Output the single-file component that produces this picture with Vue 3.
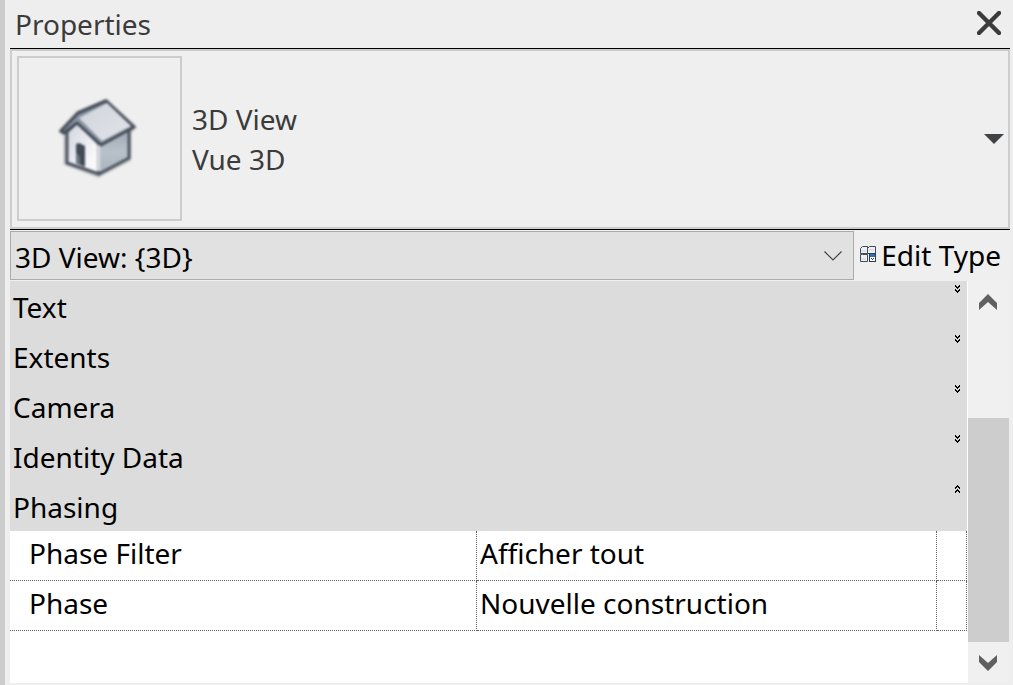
<script setup>
import { ref, computed } from 'vue';

const view = ref('{3D}');
const groups = ref([
  { name: 'Text', open: false, rows: [] },
  { name: 'Extents', open: false, rows: [] },
  { name: 'Camera', open: false, rows: [] },
  { name: 'Identity Data', open: false, rows: [] },
  {
    name: 'Phasing',
    open: true,
    rows: [
      { label: 'Phase Filter', value: 'Afficher tout' },
      { label: 'Phase', value: 'Nouvelle construction' }
    ]
  }
]);

const scroll = ref({ top: 30, size: 70 });
const thumbStyle = computed(() => ({
  top: scroll.value.top + '%',
  height: scroll.value.size + '%'
}));
</script>

<template>
  <section class="palette">
    <header class="title-bar">
      <h1>Properties</h1>
      <button type="button" class="close" aria-label="Close">
        <svg width="24" height="24" viewBox="0 0 24 24">
          <path d="M2 2L22 22M22 2L2 22" stroke="#3b3b3b" stroke-width="4.4" stroke-linecap="round" />
        </svg>
      </button>
    </header>

    <button type="button" class="type-selector">
      <span class="preview">
        <svg class="house" width="95" height="95" viewBox="2 0 95 95">
          <g stroke-linejoin="round">
            <path d="M11 40L28 22L56 10L84 36L79 41V68L48 84L16 72V43Z" fill="#4a525d" stroke="#4a525d" stroke-opacity=".3" stroke-width="5" />
            <path d="M17 41L27 31L49 53V83L17 72Z" fill="url(#front)" stroke="#4d5560" stroke-width="3" />
            <path d="M49 53L79 38V67L49 83Z" fill="url(#side)" stroke="#4d5560" stroke-width="3" />
            <path d="M49 54V80" stroke="#e3e6eb" stroke-width="3" />
            <path d="M11 40L28 22L56 10L84 36L51 54L27 32L14 42Z" fill="#8b95a2" stroke="#464e59" stroke-width="3" />
            <path d="M29 27L57 12L81 35L52 50Z" fill="url(#roof)" />
            <path d="M26 53L29 52L35 55V76L26 72Z" fill="#414a56" />
            <path d="M26 61V72L30 74V66Z" fill="#6b7481" />
          </g>
          <defs>
            <linearGradient id="front" x1="0" y1="0" x2="1" y2="1">
              <stop offset="0" stop-color="#cfd3dc" />
              <stop offset=".75" stop-color="#f8f8fb" />
            </linearGradient>
            <linearGradient id="side" x1="0" y1="0" x2="0" y2="1">
              <stop offset="0" stop-color="#9fa8b3" />
              <stop offset=".5" stop-color="#b9c1ca" />
              <stop offset="1" stop-color="#a9b2bc" />
            </linearGradient>
            <linearGradient id="roof" x1="0" y1="0" x2="1" y2="1">
              <stop offset="0" stop-color="#d0d5dc" />
              <stop offset="1" stop-color="#e1e4e9" />
            </linearGradient>
          </defs>
        </svg>
      </span>
      <span class="type-name">
        <span>3D View</span>
        <span>Vue 3D</span>
      </span>
      <svg width="20" height="10" viewBox="0 0 20 10">
        <path d="M0 0H20L10 10Z" fill="#404244" />
      </svg>
    </button>

    <div class="filter-bar">
      <div class="instance">
        <select v-model="view" aria-label="Instance">
          <option value="{3D}">3D View: {3D}</option>
        </select>
        <svg class="chevron" width="18" height="10" viewBox="0 0 18 10">
          <path d="M.5 .5L9 9L17.5 .5" fill="none" stroke="#444" stroke-width="1.2" />
        </svg>
      </div>
      <button type="button" class="edit-type">
        <svg width="17" height="17" viewBox="0 0 17 17">
          <g fill="#eef0f3" stroke="#3f4a5a">
            <path d="M2.5 .5H7.5V7.5H.5V2.5Z" />
            <path d="M9.5 .5H15.5V7.5H7.5V2.5Z" />
            <path d="M2.5 8.5H7.5V15.5H.5V8.5Z" />
          </g>
          <path d="M1 5H6M9 4H14M1 13H6" stroke="#cbd0d8" />
          <rect x="9.5" y="7.5" width="6" height="8" fill="#fff" stroke="#2f3b4d" />
          <rect x="10" y="8" width="5" height="3" fill="#2f6fc0" />
          <path d="M11 12.5H12M13 12.5H14M12 13.5H13" stroke="#2f3b4d" />
        </svg>
        <span>Edit Type</span>
      </button>
    </div>

    <div class="content">
      <div class="groups">
        <template v-for="group in groups" :key="group.name">
          <button type="button" class="group" :aria-expanded="group.open" @click="group.open = !group.open">
            <span>{{ group.name }}</span>
            <svg class="toggle" :class="{ open: group.open }" width="5" height="8" viewBox="0 0 5 8" shape-rendering="crispEdges">
              <path d="M0 0h1v1h1v1h1v-1h1v-1h1v2h-1v1h-1v1h-1v-1h-1v-1h-1zM0 4h1v1h1v1h1v-1h1v-1h1v2h-1v1h-1v1h-1v-1h-1v-1h-1z" />
            </svg>
          </button>
          <table v-if="group.open && group.rows.length">
            <tbody>
              <tr v-for="row in group.rows" :key="row.label">
                <th scope="row">{{ row.label }}</th>
                <td>{{ row.value }}</td>
                <td class="extra"></td>
              </tr>
            </tbody>
          </table>
        </template>
      </div>

      <div class="scrollbar">
        <button type="button" aria-label="Scroll up">
          <svg width="18" height="16" viewBox="0 0 18 16">
            <path d="M0 9L9 0L18 9V16L9 8L0 16Z" fill="#606060" />
          </svg>
        </button>
        <div class="track">
          <div class="thumb" :style="thumbStyle"></div>
        </div>
        <button type="button" aria-label="Scroll down">
          <svg width="18" height="16" viewBox="0 0 18 16">
            <path d="M0 7L9 16L18 7V0L9 8L0 0Z" fill="#606060" />
          </svg>
        </button>
      </div>
    </div>
  </section>
</template>

<style>
body {
  margin: 0;
  background: #eee;
}
</style>

<style scoped>
.palette {
  box-sizing: border-box;
  display: flex;
  flex-direction: column;
  min-height: 100vh;
  padding: 0 3px 2px 5px;
  border-left: 5px solid #ccc;
  background: #eee;
  color: #000;
  font-family: "Noto Sans", "Open Sans", sans-serif;
  font-size: 28px;
  line-height: 40px;
}
button,
select {
  margin: 0;
  padding: 0;
  border: 0;
  border-radius: 0;
  background: none;
  color: inherit;
  font: inherit;
  text-align: left;
}
svg {
  display: block;
  flex: none;
}

.title-bar {
  display: flex;
  align-items: center;
  justify-content: space-between;
  height: 48px;
  padding: 0 9px 0 5px;
  border-bottom: 1px solid #000;
  color: #3b3b3b;
}
.title-bar h1 {
  margin: 0;
  font-size: 28px;
  font-weight: 400;
}
.close {
  padding-bottom: 2px;
}

.type-selector {
  display: flex;
  align-items: center;
  gap: 10px;
  padding: 5px 4px 6px 5px;
  border: 2px solid #cdcdcd;
  background: #efefef;
  color: #3b3b3b;
}
.preview {
  display: flex;
  align-items: center;
  justify-content: center;
  width: 161px;
  height: 161px;
  border: 2px solid #cdcdcd;
}
.house {
  filter: blur(1px);
}
.type-name {
  display: flex;
  flex: 1;
  flex-direction: column;
}

.filter-bar {
  display: flex;
  padding: 1px 0;
  border-top: 1px solid #000;
  background: #efefef;
}
.instance {
  position: relative;
  flex: 1;
}
.instance select {
  display: block;
  width: 100%;
  height: 49px;
  padding: 2px 40px 0 4px;
  border: 1px solid #acacac;
  background: #e1e1e1;
  appearance: none;
}
.chevron {
  position: absolute;
  top: 20px;
  right: 12px;
  pointer-events: none;
}
.edit-type {
  display: flex;
  align-items: center;
  gap: 4px;
  padding: 0 9px 2px 6px;
}

.content {
  display: flex;
  flex: 1;
  margin-right: 1px;
}
.groups {
  flex: 1;
  padding-right: 1px;
  background: #fff;
}
.group {
  display: flex;
  justify-content: space-between;
  width: 100%;
  height: 50px;
  padding: 4px 7px 0 3px;
  box-sizing: border-box;
  background: #dcdcdc;
  line-height: 44px;
}
.toggle.open {
  transform: scaleY(-1);
}

table {
  width: 100%;
  border-collapse: separate;
  border-spacing: 0;
  table-layout: fixed;
}
th,
td {
  box-sizing: border-box;
  height: 50px;
  padding: 0 3px 5px;
  border-right: 1px dotted #606060;
  border-bottom: 1px dotted #606060;
  font-weight: 400;
  text-align: left;
}
th {
  width: 467px;
  padding-left: 19px;
}
.extra {
  width: 30px;
}

.scrollbar {
  display: flex;
  flex-direction: column;
  width: 41px;
  background: #f0f0f0;
}
.scrollbar button {
  display: flex;
  align-items: center;
  justify-content: center;
  height: 41px;
  padding-right: 1px;
}
.track {
  position: relative;
  flex: 1;
}
.thumb {
  position: absolute;
  width: 100%;
  background: #cdcdcd;
}
</style>
